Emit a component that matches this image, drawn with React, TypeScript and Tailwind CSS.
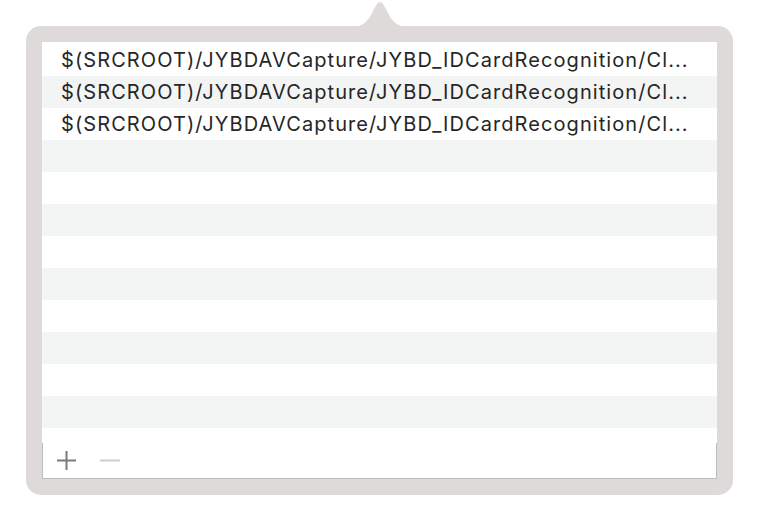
import React from 'react';

const paths = [
  '$(SRCROOT)/JYBDAVCapture/JYBD_IDCardRecognition/Cl...',
  '$(SRCROOT)/JYBDAVCapture/JYBD_IDCardRecognition/Cl...',
  '$(SRCROOT)/JYBDAVCapture/JYBD_IDCardRecognition/Cl...',
];

const ROW_COUNT = 12;

export default function App() {
  const rows = Array.from({ length: ROW_COUNT }, (_, i) => paths[i] ?? '');

  return (
    <div
      className="relative w-[760px] h-[522px] bg-white pt-[26px] pl-[26px]"
      style={{ fontFamily: 'Inter, "Liberation Sans", sans-serif' }}
    >
      {/* popover arrow */}
      <svg
        className="absolute left-[348px] top-[1px]"
        width="64"
        height="27"
        viewBox="0 0 64 27"
      >
        <path
          d="M0 26 C14 26 18 23 24 12 C28 4 30 1 32 1 C34 1 36 4 40 12 C46 23 50 26 64 26 L64 27 L0 27 Z"
          fill="#dddad9"
        />
      </svg>

      <div className="w-[707px] h-[469px] rounded-[15px] bg-[#dddad9] pt-4 pl-4 pr-4">
        <div className="w-[675px] h-[437px] bg-white flex flex-col">
          <div className="h-[401px] pt-[2px] overflow-hidden">
            {rows.map((text, i) => (
              <div
                key={i}
                className={`h-8 flex items-center pl-[19px] text-[20px] text-[#262626] tracking-[1.08px] whitespace-nowrap ${
                  i % 2 === 1 ? 'bg-[#f3f4f4]' : 'bg-white'
                }`}
              >
                {text}
              </div>
            ))}
          </div>
          <div className="flex-1 flex items-center border-x border-b border-[#bdbdbd]">
            <button className="w-[46px] h-full flex items-center justify-center">
              <svg width="21" height="21" viewBox="0 0 21 21">
                <path d="M10.5 1 V20 M1 10.5 H20" stroke="#7a7a7a" strokeWidth="2" />
              </svg>
            </button>
            <button className="w-[42px] h-full flex items-center justify-center">
              <svg width="22" height="21" viewBox="0 0 22 21">
                <path d="M1 10.5 H21" stroke="#cdcdcd" strokeWidth="2" />
              </svg>
            </button>
          </div>
        </div>
      </div>
    </div>
  );
}
